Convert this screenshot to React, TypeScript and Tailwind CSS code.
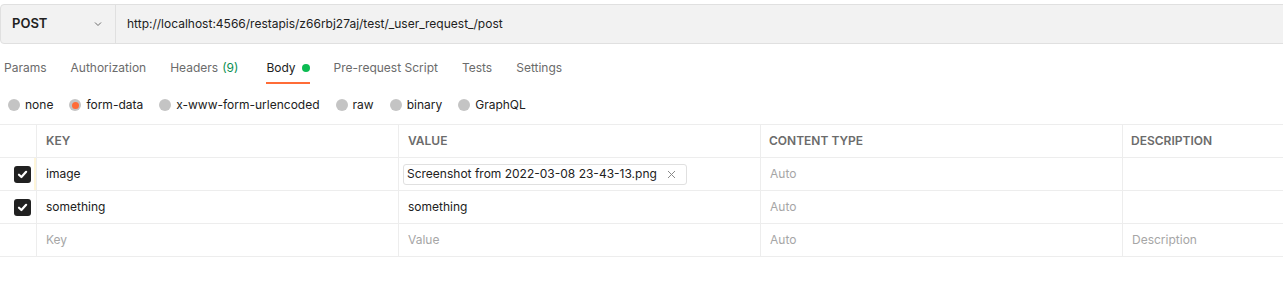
import React from "react";

const tabs = [
    { label: "Params" },
    { label: "Authorization" },
    { label: "Headers", count: "(9)" },
    { label: "Body", active: true },
    { label: "Pre-request Script" },
    { label: "Tests" },
    { label: "Settings" },
];

const bodyTypes = ["none", "form-data", "x-www-form-urlencoded", "raw", "binary", "GraphQL"];

const Check = () => (
    <div className="w-[17px] h-[17px] rounded-[3px] bg-[#212121] flex items-center justify-center">
        <svg width="11" height="11" viewBox="0 0 10 10" fill="none">
            <path d="M1.8 5.2 L4 7.3 L8.3 2.6" stroke="#fff" strokeWidth="2" strokeLinecap="round" strokeLinejoin="round" />
        </svg>
    </div>
);

const App = () => {
    return (
        <div className="w-[1283px] h-[290px] bg-white overflow-hidden text-[12px] text-[#212121]" style={{ fontFamily: "Inter, 'Noto Sans', sans-serif" }}>
            {/* url bar */}
            <div className="pt-[4px]">
                <div className="flex h-[40px] bg-[#f2f2f2] border border-[#e0e0e0] rounded-l-[4px] mr-[-4px]">
                    <div className="w-[115px] flex items-center justify-between pl-[11px] pr-[12px] border-r border-[#e0e0e0]">
                        <span className="font-semibold text-[13px] text-[#212121]">POST</span>
                        <svg width="10" height="10" viewBox="0 0 10 10" fill="none">
                            <path d="M2 3.5 L5 6.5 L8 3.5" stroke="#6b6b6b" strokeWidth="1" />
                        </svg>
                    </div>
                    <div className="flex items-center pl-[11px] text-[12px] text-[#212121]">
                        http://localhost:4566/restapis/z66rbj27aj/test/_user_request_/post
                    </div>
                </div>
            </div>

            {/* tabs */}
            <div className="flex gap-[24px] pl-[4px] mt-[15px] h-[25px] text-[12px]">
                {tabs.map((t) => (
                    <div key={t.label} className={`relative flex items-start ${t.active ? "ml-[4px] text-[#212121]" : "text-[#6b6b6b]"}`}>
                        <span>{t.label}</span>
                        {t.count && <span className="ml-[4px] text-[#0a8f52]">{t.count}</span>}
                        {t.active && <span className="ml-[6px] mt-[5px] w-[8px] h-[8px] rounded-full bg-[#0cbb52]" />}
                        {t.active && <div className="absolute left-0 right-0 bottom-0 h-[2px] bg-[#ff6c37]" />}
                    </div>
                ))}
            </div>

            {/* body types */}
            <div className="flex items-center gap-[16px] pl-[8px] h-[26px] mt-[8px] text-[12px]">
                {bodyTypes.map((b) => (
                    <div key={b} className="flex items-center gap-[5px]">
                        <div className="w-[12px] h-[12px] rounded-full bg-[#c4c4c4] flex items-center justify-center">
                            {b === "form-data" && <div className="w-[7px] h-[7px] rounded-full bg-[#ff6c37]" />}
                        </div>
                        <span className="text-[#212121]">{b}</span>
                    </div>
                ))}
            </div>

            {/* table */}
            <div className="mt-[6px] border-t border-[#ededed] grid grid-cols-[36px_362px_362px_362px_161px] text-[12px]">
                <div className="h-[33px] border-b border-[#ededed]" />
                <div className="h-[33px] border-b border-l border-[#ededed] flex items-center pl-[9px] font-semibold text-[#6b6b6b]">KEY</div>
                <div className="h-[33px] border-b border-l border-[#ededed] flex items-center pl-[9px] font-semibold text-[#6b6b6b]">VALUE</div>
                <div className="h-[33px] border-b border-l border-[#ededed] flex items-center pl-[8px] font-semibold text-[#6b6b6b]">CONTENT TYPE</div>
                <div className="h-[33px] border-b border-l border-[#ededed] flex items-center pl-[8px] font-semibold text-[#6b6b6b]">DESCRIPTION</div>

                <div className="h-[33px] border-b border-[#ededed] flex items-center pl-[14px] relative">
                    <Check />
                    <div className="absolute right-0 top-0 bottom-0 w-[2px] bg-[#fff6d9]" />
                </div>
                <div className="h-[33px] border-b border-l border-[#ededed] flex items-center pl-[9px]">image</div>
                <div className="h-[33px] border-b border-l border-[#ededed] flex items-center pl-[4px]">
                    <div className="flex items-center h-[21px] border border-[#e0e0e0] rounded-[3px] pl-[3px] pr-[10px] gap-[10px]">
                        <span>Screenshot from 2022-03-08 23-43-13.png</span>
                        <svg width="9" height="9" viewBox="0 0 9 9" fill="none">
                            <path d="M1 1 L8 8 M8 1 L1 8" stroke="#8a8a8a" strokeWidth="1" />
                        </svg>
                    </div>
                </div>
                <div className="h-[33px] border-b border-l border-[#ededed] flex items-center pl-[9px] text-[#a6a6a6]">Auto</div>
                <div className="h-[33px] border-b border-l border-[#ededed]" />

                <div className="h-[33px] border-b border-[#ededed] flex items-center pl-[14px]">
                    <Check />
                </div>
                <div className="h-[33px] border-b border-l border-[#ededed] flex items-center pl-[9px]">something</div>
                <div className="h-[33px] border-b border-l border-[#ededed] flex items-center pl-[9px]">something</div>
                <div className="h-[33px] border-b border-l border-[#ededed] flex items-center pl-[9px] text-[#a6a6a6]">Auto</div>
                <div className="h-[33px] border-b border-l border-[#ededed]" />

                <div className="h-[33px] border-b border-[#ededed]" />
                <div className="h-[33px] border-b border-l border-[#ededed] flex items-center pl-[9px] text-[#a6a6a6]">Key</div>
                <div className="h-[33px] border-b border-l border-[#ededed] flex items-center pl-[9px] text-[#a6a6a6]">Value</div>
                <div className="h-[33px] border-b border-l border-[#ededed] flex items-center pl-[9px] text-[#a6a6a6]">Auto</div>
                <div className="h-[33px] border-b border-l border-[#ededed] flex items-center pl-[9px] text-[#a6a6a6]">Description</div>
            </div>
        </div>
    );
};

export default App;
